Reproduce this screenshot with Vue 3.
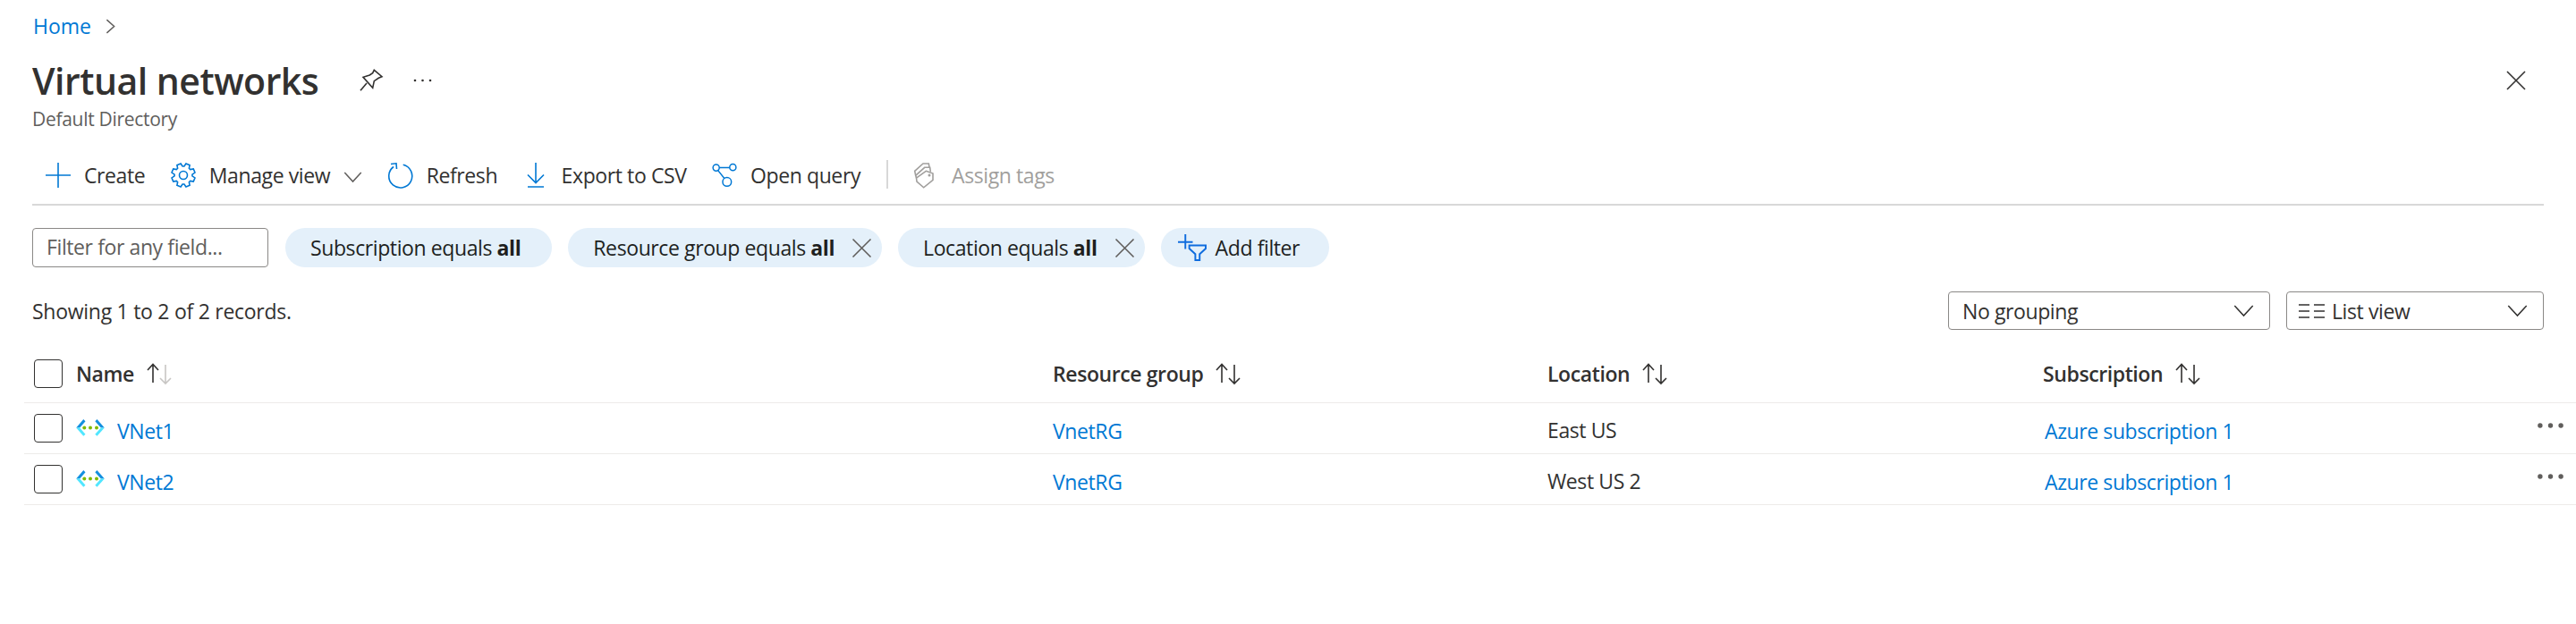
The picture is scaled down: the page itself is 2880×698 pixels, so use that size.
<template>
  <div class="page">
    <nav class="crumbs">
      <a class="link">Home</a>
      <svg class="crumb-chev" viewBox="0 0 12 18"><path d="M1.500 1 10.500 9 1.500 17" /></svg>
    </nav>

    <header class="head">
      <div class="title-row">
        <h1>Virtual networks</h1>
        <svg class="pin" viewBox="0 0 26 26">
          <path d="M15.300 1.300 24 8.700 20.300 10.300 15.300 13.700 13.700 21.300 3 9.300 10.300 7 13.700 4.700Z" />
          <path d="M7 16 0 24.300" />
        </svg>
        <svg class="head-dots" viewBox="0 0 21 4"><circle cx="2" cy="2" r="1.300" /><circle cx="10.500" cy="2" r="1.300" /><circle cx="19" cy="2" r="1.300" /></svg>
        <svg class="close" viewBox="0 0 22 22"><path d="M1 1 21 21M21 1 1 21" /></svg>
      </div>
      <div class="subtitle">Default Directory</div>
    </header>

    <div class="toolbar">
      <button class="tool">
        <svg class="icon" viewBox="0 0 28 28"><path d="M0 14H28M14 0V28" /></svg>
        Create
      </button>
      <button class="tool">
        <svg class="icon" viewBox="0 0 28 28"><path :d="gearPath" /><circle cx="14" cy="14" r="4.500" /></svg>
        Manage view
        <svg class="tool-chev" viewBox="0 0 22 13"><path d="M1 1 11 12 21 1" /></svg>
      </button>
      <button class="tool">
        <svg class="icon refresh" viewBox="0 0 28 28"><path d="M16.700 2.300A13 13 0 1 1 6 4.500" /><path d="M3 1.500 9 0.800 9.500 7" /></svg>
        Refresh
      </button>
      <button class="tool">
        <svg class="icon" viewBox="0 0 28 28"><path d="M14 0V22M5 13.500 14 22.500 23 13.500M5 27H23" /></svg>
        Export to CSV
      </button>
      <button class="tool">
        <svg class="icon" viewBox="0 0 30 28">
          <circle cx="5" cy="5" r="3.800" /><circle cx="25" cy="4.500" r="3.800" /><circle cx="18" cy="22" r="5.200" />
          <path d="M8.800 4.800H21.200M7 8 15 18" />
        </svg>
        Open query
      </button>
      <span class="tool-sep"></span>
      <button class="tool disabled">
        <svg class="icon" viewBox="0 0 28 28">
          <path d="M14.300 9.300 22 12 22 19.300 11.700 27.800 4 21 3.500 17Z" />
          <path d="M3.500 17 2.700 14.300 12.700 5.300H18.700L19.300 10M2.700 14.300 1.700 9.300 11 1H17.300L18 5" />
          <circle cx="18" cy="14" r="0.700" />
        </svg>
        Assign tags
      </button>
    </div>

    <div class="filters">
      <div class="filter-input">Filter for any field...</div>
      <div v-for="pill in pills" :key="pill.label" class="pill">
        <span>{{ pill.label }} equals <b>all</b></span>
        <svg v-if="pill.closable" class="pill-x" viewBox="0 0 21 21"><path d="M0.500 0.500 20.500 20.500M20.500 0.500 0.500 20.500" /></svg>
      </div>
      <div class="pill add">
        <svg class="add-icon" viewBox="0 0 33 31">
          <path d="M0 9H17M8.500 0V17" />
          <path d="M13 13H32V16.500L25 23V30H20V23L13 16.500Z" />
        </svg>
        <span>Add filter</span>
      </div>
    </div>

    <div class="summary">
      <span class="count">Showing 1 to 2 of 2 records.</span>
      <div class="select group">
        <span>No grouping</span>
        <svg class="sel-chev" viewBox="0 0 24 14"><path d="M1 1 12 13 23 1" /></svg>
      </div>
      <div class="select view">
        <svg class="list-icon" viewBox="0 0 30 16"><path d="M0 1H12M0 8H12M0 15H12M17 1H29M17 8H29M17 15H29" /></svg>
        <span>List view</span>
        <svg class="sel-chev" viewBox="0 0 24 14"><path d="M1 1 12 13 23 1" /></svg>
      </div>
    </div>

    <div class="table">
      <div class="tr th">
        <div class="cell name-cell">
          <span class="check"></span>
          <span class="head-label">Name</span>
          <svg class="sort" viewBox="0 0 30 24"><path d="M8 22V2M2 8 8 1.500 14 8" /><path class="faint" d="M22 2V23M16 17 22 23 28 17" /></svg>
        </div>
        <div v-for="col in columns" :key="col" class="cell">
          <span class="head-label">{{ col }}</span>
          <svg class="sort" viewBox="0 0 30 24"><path d="M8 22V2M2 8 8 1.500 14 8M22 2V23M16 17 22 23 28 17" /></svg>
        </div>
      </div>
      <div v-for="row in rows" :key="row.name" class="tr">
        <div class="cell name-cell">
          <span class="check"></span>
          <svg class="vnet" viewBox="0 0 32 20">
            <path class="vnet-dark" d="M8.300 0 0.200 9.600H4.200L10.500 2.200Z" />
            <path class="vnet-light" d="M0.200 9.600 8.300 18.800 10.500 16.800 4.200 9.600Z" />
            <path class="vnet-dark" d="M23.500 0 31.800 9.600H27.800L21.300 2.200Z" />
            <path class="vnet-light" d="M31.800 9.600 23.500 18.800 21.300 16.800 27.800 9.600Z" />
            <circle class="vnet-dot" cx="9.300" cy="9.600" r="2" />
            <circle class="vnet-dot" cx="16" cy="9.600" r="2" />
            <circle class="vnet-dot" cx="23" cy="9.600" r="2" />
          </svg>
          <a class="link text-cell">{{ row.name }}</a>
        </div>
        <div class="cell"><a class="link text-cell">{{ row.group }}</a></div>
        <div class="cell"><span class="text-cell plain">{{ row.location }}</span></div>
        <div class="cell sub-cell">
          <a class="link text-cell">{{ row.subscription }}</a>
          <svg class="row-dots" viewBox="0 0 30 6"><circle cx="3" cy="3" r="2.800" /><circle cx="15" cy="3" r="2.800" /><circle cx="27" cy="3" r="2.800" /></svg>
        </div>
      </div>
    </div>
  </div>
</template>

<script setup>
const pills = [
  { label: 'Subscription', closable: false },
  { label: 'Resource group', closable: true },
  { label: 'Location', closable: true },
]

const columns = ['Resource group', 'Location', 'Subscription']

const rows = [
  { name: 'VNet1', group: 'VnetRG', location: 'East US', subscription: 'Azure subscription 1' },
  { name: 'VNet2', group: 'VnetRG', location: 'West US 2', subscription: 'Azure subscription 1' },
]

// cog outline, eight teeth
function buildGear() {
  const pts = []
  for (let i = 0; i < 8; i++) {
    const a = (i * Math.PI) / 4 + Math.PI / 8
    for (const [r, off] of [[10, -0.3], [13.3, -0.17], [13.3, 0.17], [10, 0.3]]) {
      pts.push((14 + r * Math.cos(a + off)).toFixed(2) + ' ' + (14 + r * Math.sin(a + off)).toFixed(2))
    }
  }
  return 'M' + pts.join('L') + 'Z'
}
const gearPath = buildGear()
</script>

<style>
html, body {
  margin: 0;
  background: #fff;
}
</style>

<style scoped>
.page {
  width: 2880px;
  height: 698px;
  overflow: hidden;
  font-family: "Open Sans", "Noto Sans", sans-serif;
  font-size: 23px;
  letter-spacing: -0.4px;
  color: #323130;
  box-sizing: border-box;
}

svg {
  fill: none;
  stroke-width: 1.6;
  flex: none;
  display: block;
  overflow: visible;
}

.link {
  color: #0078d4;
  text-decoration: none;
}

.crumbs {
  height: 58px;
  padding-left: 37px;
  display: flex;
  align-items: center;
  gap: 16px;
  letter-spacing: 0;
}

.crumb-chev {
  width: 11px;
  height: 17px;
  stroke: #605e5c;
}

.head {
  padding: 0 36px;
}

.title-row {
  height: 64px;
  display: flex;
  align-items: center;
}

h1 {
  margin: 0;
  font-size: 41px;
  font-weight: 600;
  letter-spacing: -0.5px;
  width: 367px;
  line-height: 64px;
  white-space: nowrap;
}

.pin {
  width: 26px;
  height: 26px;
  stroke: #323130;
}

.head-dots {
  margin-left: 33px;
  width: 21px;
  height: 4px;
  fill: #323130;
}

.close {
  margin-left: auto;
  margin-right: 20px;
  width: 22px;
  height: 22px;
  stroke: #323130;
}

.subtitle {
  font-size: 21px;
  line-height: 22px;
  letter-spacing: -0.3px;
  color: #605e5c;
}

.toolbar {
  margin: 32px 36px 0;
  height: 40px;
  padding: 0 0 12px 15px;
  display: flex;
  align-items: flex-start;
  gap: 28.5px;
  border-bottom: 2px solid #d8d8d8;
}

.tool {
  height: 40px;
  padding: 0;
  border: 0;
  background: none;
  font: inherit;
  letter-spacing: inherit;
  color: #323130;
  display: flex;
  align-items: center;
  gap: 15px;
  white-space: nowrap;
}

.icon {
  width: 28px;
  height: 28px;
  stroke: #0078d4;
}

.tool-chev {
  width: 21px;
  height: 12px;
  margin-top: 4px;
  stroke: #605e5c;
}

.tool-sep {
  width: 2px;
  height: 32px;
  margin-top: 3px;
  background: #d8d8d8;
}

.disabled {
  color: #a19f9d;
}

.disabled .icon {
  stroke: #a19f9d;
}

.filters {
  margin: 25px 36px 0;
  display: flex;
  gap: 18px;
  height: 44px;
}

.filter-input {
  width: 264px;
  height: 44px;
  box-sizing: border-box;
  margin-right: 1px;
  padding-left: 15px;
  line-height: 41px;
  color: #605e5c;
  border: 1.5px solid #8a8886;
  border-radius: 4px;
}

.pill {
  height: 44px;
  padding: 0 12px 0 28px;
  border-radius: 22px;
  background: #e4f0fa;
  color: #201f1e;
  display: flex;
  align-items: center;
  gap: 20px;
  white-space: nowrap;
}

.pill:nth-child(2) {
  padding-right: 35px;
}

.pill-x {
  width: 21px;
  height: 21px;
  stroke: #605e5c;
}

.add {
  padding: 0 33px 0 19px;
  gap: 10px;
}

.add-icon {
  width: 32px;
  height: 30px;
  stroke: #0f6cde;
  stroke-width: 2;
}

.summary {
  margin: 27px 36px 0;
  height: 43px;
  display: flex;
  align-items: center;
  gap: 18px;
}

.count {
  margin-right: auto;
  letter-spacing: -0.27px;
}

.select {
  height: 43px;
  box-sizing: border-box;
  border: 1.5px solid #8a8886;
  border-radius: 4px;
  padding: 0 17px 0 15px;
  display: flex;
  align-items: center;
  color: #323130;
}

.group {
  width: 360px;
}

.view {
  width: 288px;
  padding-left: 13px;
}

.sel-chev {
  width: 23px;
  height: 13px;
  margin-left: auto;
  stroke: #323130;
}

.list-icon {
  width: 30px;
  height: 16px;
  margin-right: 7px;
  stroke: #323130;
}

.table {
  margin: 16px 0 0 27px;
}

.tr {
  display: grid;
  grid-template-columns: 1150px 553px 554px 1fr;
  height: 57px;
  box-sizing: border-box;
  border-bottom: 1.5px solid #edebe9;
}

.th {
  height: 66px;
}

.cell {
  display: flex;
  align-items: center;
  min-width: 0;
}

.name-cell {
  padding-left: 11px;
}

.check {
  width: 32px;
  height: 32px;
  box-sizing: border-box;
  border: 1.5px solid #323130;
  border-radius: 4px;
  flex: none;
  margin-right: 15px;
}

.head-label {
  font-weight: 600;
  color: #323130;
}

.sort {
  width: 30px;
  height: 24px;
  margin-left: 13px;
  stroke: #323130;
}

.faint {
  stroke: #c8c6c4;
}

.vnet {
  width: 32px;
  height: 20px;
  margin-right: 14px;
}

.vnet path {
  stroke: none;
}

.vnet-dark {
  fill: #1490df;
}

.vnet-light {
  fill: #50e6ff;
}

.vnet-dot {
  fill: #7fba00;
  stroke: none;
}

.text-cell {
  margin-top: 6px;
}

.plain {
  margin-top: 4px;
}

.sub-cell {
  justify-content: space-between;
  padding-left: 2px;
  padding-right: 14px;
}

.row-dots {
  width: 29px;
  height: 6px;
  margin-top: -6px;
  fill: #605e5c;
}
</style>
